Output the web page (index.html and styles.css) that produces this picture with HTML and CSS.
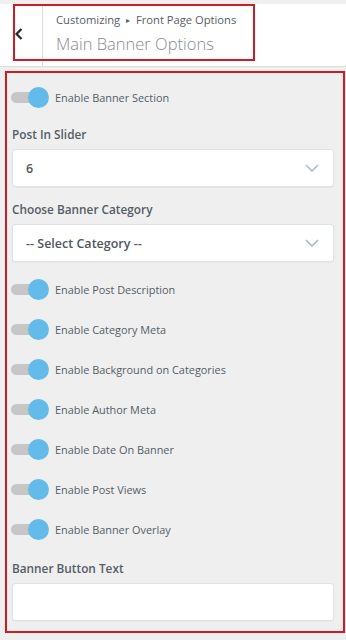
FILE: index.html
```html
<!DOCTYPE html>
<html>
<head>
<meta charset="utf-8">
<link rel="stylesheet" href="styles.css">
</head>
<body>
<header class="header">
  <div class="back">
    <svg width="10" height="14" viewBox="0 0 10 14"><path d="M7.5 2 L2.5 7 L7.5 12" fill="none" stroke="#23282d" stroke-width="2.2"/></svg>
  </div>
  <div class="titles">
    <div class="crumb">Customizing <span class="sep">▸</span> Front Page Options</div>
    <div class="title">Main Banner Options</div>
  </div>
  <div class="mark-head"></div>
</header>
<main class="panel">
  <div class="toggle-row"><span class="toggle"><span class="knob"></span></span><span class="tlabel">Enable Banner Section</span></div>
  <div class="field f1">
    <div class="flabel">Post In Slider</div>
    <div class="select"><span class="sval">6</span><svg class="chev" width="14" height="8" viewBox="0 0 14 8"><path d="M1 1 L7 7 L13 1" fill="none" stroke="#a7bccd" stroke-width="1.6"/></svg></div>
  </div>
  <div class="field f2">
    <div class="flabel">Choose Banner Category</div>
    <div class="select"><span class="sval">-- Select Category --</span><svg class="chev" width="14" height="8" viewBox="0 0 14 8"><path d="M1 1 L7 7 L13 1" fill="none" stroke="#a7bccd" stroke-width="1.6"/></svg></div>
  </div>
  <div class="toggles">
    <div class="toggle-row"><span class="toggle"><span class="knob"></span></span><span class="tlabel">Enable Post Description</span></div>
    <div class="toggle-row"><span class="toggle"><span class="knob"></span></span><span class="tlabel">Enable Category Meta</span></div>
    <div class="toggle-row"><span class="toggle"><span class="knob"></span></span><span class="tlabel">Enable Background on Categories</span></div>
    <div class="toggle-row"><span class="toggle"><span class="knob"></span></span><span class="tlabel">Enable Author Meta</span></div>
    <div class="toggle-row"><span class="toggle"><span class="knob"></span></span><span class="tlabel">Enable Date On Banner</span></div>
    <div class="toggle-row"><span class="toggle"><span class="knob"></span></span><span class="tlabel">Enable Post Views</span></div>
    <div class="toggle-row"><span class="toggle"><span class="knob"></span></span><span class="tlabel">Enable Banner Overlay</span></div>
  </div>
  <div class="field f3">
    <div class="flabel">Banner Button Text</div>
    <div class="input"></div>
  </div>
</main>
</body>
</html>
```
FILE: styles.css
```css
* { box-sizing: border-box; }
html, body { margin: 0; padding: 0; }
body {
  width: 346px;
  height: 640px;
  overflow: hidden;
  background: #efefef;
  font-family: "Open Sans", "Noto Sans", sans-serif;
  color: #555d66;
}
.header {
  position: relative;
  margin-top: 4px;
  height: 63px;
  background: #fff;
  border-bottom: 1px solid #dddddd;
  display: flex;
}
.back {
  width: 43px;
  border-right: 1px solid #dddddd;
  display: flex;
  align-items: center;
  padding-left: 14px;
  padding-bottom: 2px;
}
.titles {
  padding-left: 13px;
  padding-top: 8px;
}
.crumb {
  font-size: 11.2px;
  line-height: 16px;
  color: #555d66;
}
.sep { font-size: 8px; vertical-align: 1px; margin: 0 3px; }
.title {
  font-size: 16.5px;
  line-height: 24px;
  margin-top: 4px;
  color: #8a8a8a;
  font-weight: 300;
}
.mark-head {
  position: absolute;
  left: 13px;
  top: 0;
  width: 242px;
  height: 57px;
  border: 2px solid #cc1c24;
}
.panel {
  margin: 4px 1px 0 5px;
  border: 2px solid #cc1c24;
  padding: 4px 9px 10px 5px;
}
.toggle-row {
  height: 40px;
  display: flex;
  align-items: center;
}
.toggle {
  position: relative;
  width: 34px;
  height: 11px;
  margin-left: -1px;
  border-radius: 6px;
  background: #c6c6c6;
  flex: none;
}
.knob {
  position: absolute;
  right: -4px;
  top: -5px;
  width: 21px;
  height: 21px;
  border-radius: 50%;
  background: #63bbea;
}
.tlabel {
  margin-left: 10px;
  font-size: 10.9px;
  color: #555d66;
}
.flabel {
  height: 20px;
  line-height: 20px;
  font-size: 11.8px;
  font-weight: 600;
  color: #555d66;
  margin-bottom: 5px;
}
.f1 { margin-top: 7px; }
.f2 { margin-top: 12px; }
.toggles { margin-top: 7px; }
.f3 { margin-top: 9px; }
.select, .input {
  height: 38px;
  background: #fff;
  border: 1px solid #dde3e8;
  border-radius: 3px;
  box-shadow: 0 1px 1px rgba(0,0,0,0.04);
}
.select {
  display: flex;
  align-items: center;
  justify-content: space-between;
  padding: 0 14px 0 13px;
}
.sval {
  font-size: 12.5px;
  font-weight: 600;
  color: #50575e;
}
.chev { flex: none; }
```
